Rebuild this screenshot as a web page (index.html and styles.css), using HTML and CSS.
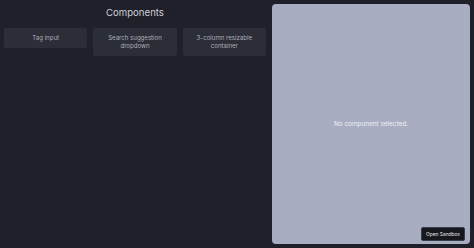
FILE: index.html
```html
<!DOCTYPE html>
<html>
<head>
<meta charset="utf-8">
<link rel="stylesheet" href="styles.css">
</head>
<body>
<div class="app">
  <section class="list">
    <h1 class="title">Components</h1>
    <div class="cards">
      <div class="card">Tag input</div>
      <div class="card">Search suggestion dropdown</div>
      <div class="card">3-column resizable container</div>
    </div>
  </section>
  <section class="preview">
    <p class="empty">No component selected.</p>
    <button class="sandbox">Open Sandbox</button>
  </section>
</div>
</body>
</html>
```
FILE: styles.css
```css
html, body {
  margin: 0;
  height: 100%;
}
body {
  background: #1f2029;
  font-family: Inter, "Noto Sans", sans-serif;
  color: #c9cad3;
}
.app {
  box-sizing: border-box;
  height: 100%;
  padding: 4px;
  display: grid;
  grid-template-columns: 262px 1fr;
  gap: 6px;
}
.list {
  display: flex;
  flex-direction: column;
}
.title {
  margin: 2px 0 0;
  height: 22px;
  font-size: 9.6px;
  font-weight: 400;
  line-height: 14px;
  text-align: center;
  color: #cfd0d8;
}
.cards {
  display: grid;
  grid-template-columns: repeat(3, 1fr);
  gap: 6px;
  align-items: start;
}
.card {
  background: #2b2d37;
  border-radius: 2px;
  padding: 6px 6px;
  font-size: 6.1px;
  line-height: 8px;
  text-align: center;
  color: #aeafb8;
}
.preview {
  position: relative;
  background: #a9adc1;
  border-radius: 4px;
  display: flex;
  align-items: center;
  justify-content: center;
}
.empty {
  margin: 0;
  font-size: 6.4px;
  color: #eef0f6;
}
.sandbox {
  position: absolute;
  right: 5px;
  bottom: 3px;
  width: 44px;
  height: 14px;
  padding: 0;
  background: #17181d;
  border: 1px solid #3a3c48;
  border-radius: 2px;
  color: #e4e5ea;
  font-family: Inter, "Noto Sans", sans-serif;
  font-size: 4.9px;
  line-height: 12px;
}
```
